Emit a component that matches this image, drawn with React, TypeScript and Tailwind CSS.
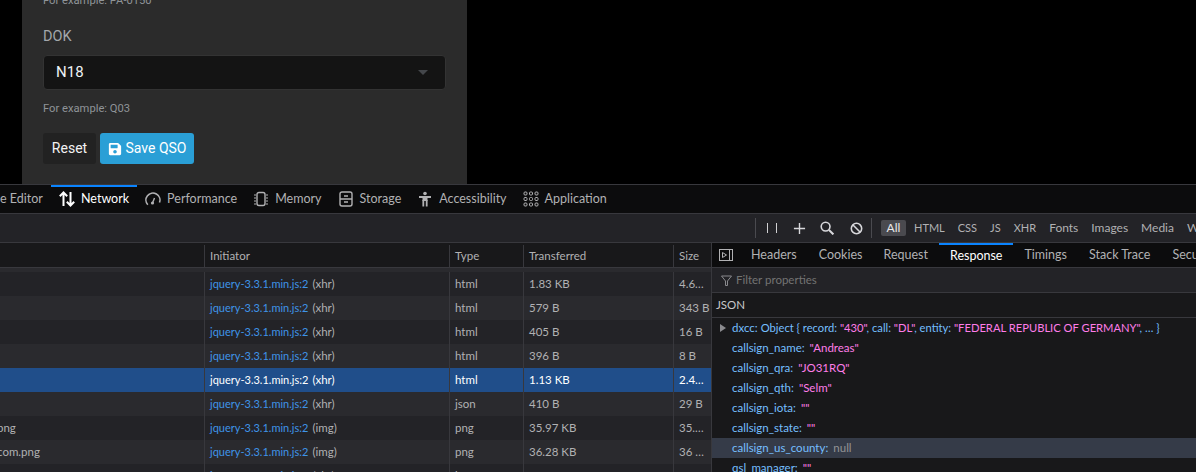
import { FaSave } from 'react-icons/fa';

const ubuntu = "font-['Lato','Noto_Sans',sans-serif]";

const rows = [
  { name: '', kind: 'xhr', type: 'html', size: '1.83 KB', raw: '4.6…' },
  { name: '', kind: 'xhr', type: 'html', size: '579 B', raw: '343 B' },
  { name: '', kind: 'xhr', type: 'html', size: '405 B', raw: '16 B' },
  { name: '', kind: 'xhr', type: 'html', size: '396 B', raw: '8 B' },
  { name: '', kind: 'xhr', type: 'html', size: '1.13 KB', raw: '2.4…', selected: true },
  { name: '', kind: 'xhr', type: 'json', size: '410 B', raw: '29 B' },
  { name: 'png', kind: 'img', type: 'png', size: '35.97 KB', raw: '35.…' },
  { name: 'com.png', kind: 'img', type: 'png', size: '36.28 KB', raw: '36 …' },
  { name: '', kind: 'xhr', type: 'h', size: '', raw: '' },
];

const tree = [
  { key: 'callsign_name:', value: '"Andreas"' },
  { key: 'callsign_qra:', value: '"JO31RQ"' },
  { key: 'callsign_qth:', value: '"Selm"' },
  { key: 'callsign_iota:', value: '""' },
  { key: 'callsign_state:', value: '""' },
  { key: 'callsign_us_county:', value: 'null', active: true },
  { key: 'qsl_manager:', value: '""' },
];

function Icon({ children }: { children: React.ReactNode }) {
  return (
    <svg width="16" height="16" viewBox="0 0 16 16" fill="none" stroke="currentColor" strokeWidth="1.4" className="shrink-0">
      {children}
    </svg>
  );
}

function DevTab({ icon, label, active }: { icon: React.ReactNode; label: string; active?: boolean }) {
  return (
    <div className={`flex h-full items-center gap-[6px] px-[8px] pb-[2px] border-t-2 ${active ? 'border-[#0a84ff] text-white' : 'border-transparent text-[#b1b1b3]'}`}>
      {icon}
      <span>{label}</span>
    </div>
  );
}

function Cell({ w, children, className = 'pl-[5px]' }: { w: string; children?: React.ReactNode; className?: string }) {
  return <div className={`${w} shrink-0 h-full flex items-center overflow-hidden whitespace-nowrap border-r border-[#38383d] ${className}`}>{children}</div>;
}

export default function App() {
  return (
    <div className="h-[472px] w-[1196px] overflow-hidden bg-black flex flex-col">
      {/* page */}
      <div className="h-[184px] shrink-0 pl-[22px] overflow-hidden font-['Roboto',sans-serif]">
        <div className="w-[445px] h-[184px] bg-[#2b2b2b] px-[21px] flex flex-col">
          <p className="text-[11.2px] leading-[14px] -mt-[6px] text-[#8f9498]">For example: PA-0150</p>
          <label className="mt-[17px] text-[14.5px] leading-[24px] text-[#a3a7ab]">DOK</label>
          <div className="mt-[6px] h-[35px] shrink-0 rounded-[4px] border border-[#333333] bg-[#141414] flex items-center justify-between pl-[12px] pr-[17px] text-[15px] text-[#eef2f5]">
            <span>N18</span>
            <span className="w-0 h-0 border-x-[5px] border-t-[5px] border-x-transparent border-t-[#44474b]" />
          </div>
          <p className="mt-[11px] text-[11.2px] leading-[16px] text-[#8f9498]">For example: Q03</p>
          <div className="mt-[16px] flex gap-[4px] text-[14px]">
            <button className="h-[31px] w-[53px] rounded-[3px] bg-[#222222] text-[#f2f2f2]">Reset</button>
            <button className="h-[31px] w-[94px] rounded-[3px] bg-[#2a9fd6] text-white flex items-center justify-center gap-[4px]">
              <FaSave size={14} />
              Save QSO
            </button>
          </div>
        </div>
      </div>

      {/* devtools tabs */}
      <div className={`h-[30px] shrink-0 border-y border-[#38383d] bg-[#0c0c0d] flex items-center text-[12.5px] whitespace-nowrap ${ubuntu}`}>
        <span className="text-[#b1b1b3] w-[51px]">e Editor</span>
        <DevTab
          active
          label="Network"
          icon={<Icon><path d="M4.5 15V1.5M.8 5.2l3.7-3.7 3.7 3.7M11.5 1v13.5M7.8 10.8l3.7 3.7 3.7-3.7" strokeWidth="2" /></Icon>}
        />
        <DevTab
          label="Performance"
          icon={<Icon><path d="M2.8 13.8A7 7 0 1 1 14.5 11.5" strokeWidth="1.6" /><circle cx="7.5" cy="12" r="1.6" fill="currentColor" stroke="none" /><path d="M7.5 12l2-5" /></Icon>}
        />
        <DevTab
          label="Memory"
          icon={<Icon><rect x="4" y="1.5" width="8" height="13" rx="2" /><path d="M1 4h2M1 7h2M1 10h2M1 13h2M13 4h2M13 7h2M13 10h2M13 13h2" strokeWidth="1" /></Icon>}
        />
        <DevTab
          label="Storage"
          icon={<Icon><rect x="2" y="1" width="12" height="14" rx="2" /><path d="M2 8h12M6 5h4M6 11h4" /></Icon>}
        />
        <DevTab
          label="Accessibility"
          icon={<Icon><circle cx="8" cy="2.5" r="1.8" fill="currentColor" stroke="none" /><path d="M2 6h12" strokeWidth="2" /><path d="M5.5 6h5v4h-5z" fill="currentColor" stroke="none" /><path d="M6.3 9v6.5M9.7 9v6.5" strokeWidth="1.8" /></Icon>}
        />
        <DevTab
          label="Application"
          icon={<Icon><g strokeWidth="1"><rect x="1" y="1" width="3" height="3" rx="1" /><rect x="6.5" y="1" width="3" height="3" rx="1" /><rect x="12" y="1" width="3" height="3" rx="1" /><rect x="1" y="6.5" width="3" height="3" rx="1" /><rect x="6.5" y="6.5" width="3" height="3" rx="1" /><rect x="12" y="6.5" width="3" height="3" rx="1" /><rect x="1" y="12" width="3" height="3" rx="1" /><rect x="6.5" y="12" width="3" height="3" rx="1" /><rect x="12" y="12" width="3" height="3" rx="1" /></g></Icon>}
        />
      </div>

      {/* toolbar */}
      <div className={`h-[29px] shrink-0 border-b border-[#38383d] bg-[#232327] flex items-center justify-end text-[12px] text-[#b1b1b3] whitespace-nowrap overflow-hidden ${ubuntu}`}>
        <div className="flex items-center h-full w-[441px] shrink-0">
          <span className="h-[20px] w-px shrink-0 bg-[#4a4a4f]" />
          <span className="ml-[11px] flex shrink-0 gap-[8px]"><i className="block h-[10px] w-px bg-[#d0d0d2]" /><i className="block h-[10px] w-px bg-[#d0d0d2]" /></span>
          <svg className="ml-[16px] shrink-0" width="13" height="13" viewBox="0 0 14 14" stroke="#d7d7db" strokeWidth="1.5"><path d="M7 1v12M1 7h12" /></svg>
          <svg className="ml-[14px] shrink-0" width="14" height="14" viewBox="0 0 14 14" fill="none" stroke="#d7d7db" strokeWidth="1.6"><circle cx="5.6" cy="5.6" r="4.4" /><path d="M9 9l4.4 4.4" strokeWidth="2" /></svg>
          <svg className="ml-[16px] shrink-0" width="13" height="13" viewBox="0 0 14 14" fill="none" stroke="#d7d7db" strokeWidth="1.7"><circle cx="7" cy="7" r="5.6" /><path d="M3 3l8 8" /></svg>
          <span className="ml-[8px] h-[20px] w-px shrink-0 bg-[#4a4a4f]" />
          <span className="ml-[9px] h-[16px] w-[25px] shrink-0 rounded-[2px] bg-[#4a4a4f] text-[#e8e8ea] text-center leading-[16px]">All</span>
          <span className="ml-[8px] text-[11px]">HTML</span>
          <span className="ml-[13px] text-[11px]">CSS</span>
          <span className="ml-[13px] text-[11px]">JS</span>
          <span className="ml-[13px] text-[11px]">XHR</span>
          <span className="ml-[13px]">Fonts</span>
          <span className="ml-[13px]">Images</span>
          <span className="ml-[13px]">Media</span>
          <span className="ml-[13px]">WS</span>
        </div>
      </div>

      <div className={`flex-1 min-h-0 flex text-[11.5px] whitespace-nowrap ${ubuntu}`}>
        {/* request table */}
        <div className="w-[711px] shrink-0 flex flex-col overflow-hidden text-[#b1b1b3]">
          <div className="h-[25px] shrink-0 flex pt-[2px] bg-[#18181a] border-b border-[#38383d]">
            <Cell w="w-[205px]" />
            <Cell w="w-[245px]">Initiator</Cell>
            <Cell w="w-[74px]">Type</Cell>
            <Cell w="w-[150px]">Transferred</Cell>
            <Cell w="w-[37px]" className="pl-[5px] border-r-0">Size</Cell>
          </div>
          <div className="h-[4px] shrink-0 bg-[#2a2a2e]" />
          {rows.map((row, i) => (
            <div
              key={i}
              className={`h-[24px] shrink-0 flex ${row.selected ? 'bg-[#204e8a] text-white' : i % 2 === 0 ? 'bg-[#232327]' : 'bg-[#2a2a2e]'}`}
            >
              <Cell w="w-[205px]" className="pl-0">
                <span className="-ml-[3px]">{row.name}</span>
              </Cell>
              <Cell w="w-[245px]">
                <span className={`text-[11px] ${row.selected ? '' : 'text-[#3f94e8]'}`}>jquery-3.3.1.min.js:2</span>
                <span className="ml-[4px]">({row.kind})</span>
              </Cell>
              <Cell w="w-[74px]">{row.type}</Cell>
              <Cell w="w-[150px]">{row.size}</Cell>
              <Cell w="w-[37px]" className="pl-[5px] border-r-0">{row.raw}</Cell>
            </div>
          ))}
        </div>

        {/* response panel */}
        <div className="flex-1 min-w-0 border-l border-[#38383d] flex flex-col overflow-hidden bg-[#18181a] text-[#b1b1b3]">
          <div className="h-[25px] shrink-0 flex items-center bg-[#0c0c0d] border-b border-[#38383d] text-[12.5px]">
            <svg className="ml-[7px] shrink-0" width="14" height="14" viewBox="0 0 14 14" fill="none" stroke="#b1b1b3"><rect x="0.5" y="1.5" width="13" height="11" /><path d="M10.5 1.5v11" /><path d="M3.5 4.5l4 2.5-4 2.5z" /></svg>
            <span className="ml-[18px]">Headers</span>
            <span className="ml-[22px]">Cookies</span>
            <span className="ml-[21px]">Request</span>
            <span className="ml-[11px] h-full px-[11px] border-t-2 border-[#0a84ff] text-white flex items-center">Response</span>
            <span className="ml-[11px]">Timings</span>
            <span className="ml-[22px]">Stack Trace</span>
            <span className="ml-[22px]">Security</span>
          </div>
          <div className="h-[25px] shrink-0 flex items-center gap-[4px] pl-[9px] bg-[#232327] border-b border-[#38383d] text-[#737373]">
            <svg className="shrink-0" width="11" height="11" viewBox="0 0 11 11" fill="none" stroke="#8a8a8e"><path d="M.5 1h10L6.5 6v4.5h-2V6z" /></svg>
            Filter properties
          </div>
          <div className="h-[25px] shrink-0 flex items-center pl-[4px] border-b border-[#38383d] text-[#c8c8ca]">JSON</div>
          <div>
            <div className="h-[20px] flex items-center pl-[8px]">
              <span className="mr-[6px] w-0 h-0 border-y-[4.5px] border-l-[6px] border-y-transparent border-l-[#8a8a8e]" />
              <span className="text-[#75bfff]">dxcc:</span>
              <span className="ml-[3px] text-[11.2px] text-[#75bfff]">Object {'{'} record: <span className="text-[#ff7de9]">"430"</span>, call: <span className="text-[#ff7de9]">"DL"</span>, entity: <span className="text-[#ff7de9]">"FEDERAL REPUBLIC OF GERMANY"</span>, … {'}'}</span>
            </div>
            {tree.map((item) => (
              <div key={item.key} className={`h-[20px] flex items-center pl-[20px] ${item.active ? 'bg-[#353b48]' : ''}`}>
                <span className="text-[#75bfff]">{item.key}</span>
                <span className={`ml-[5px] ${item.value === 'null' ? 'text-[#939395]' : 'text-[#ff7de9]'}`}>{item.value}</span>
              </div>
            ))}
          </div>
        </div>
      </div>
    </div>
  );
}
